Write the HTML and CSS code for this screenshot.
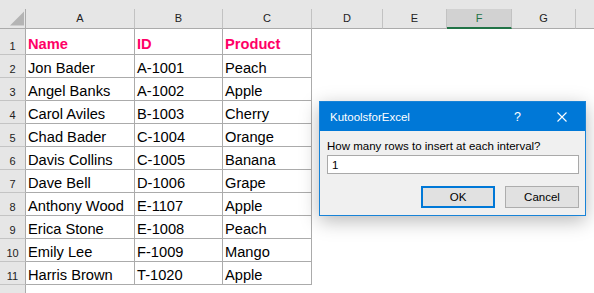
FILE: index.html
```html
<!DOCTYPE html>
<html>
<head>
<meta charset="utf-8">
<link rel="stylesheet" href="styles.css">
</head>
<body>
<div class="sheet">
  <div class="band"></div>
  <div class="row head">
    <div class="corner"><svg width="25" height="19" viewBox="0 0 25 19"><polygon points="10,16.5 24,16.5 24,2.5" fill="#b4b4b4"/></svg></div>
    <div class="ch">A</div>
    <div class="ch">B</div>
    <div class="ch">C</div>
    <div class="ch">D</div>
    <div class="ch">E</div>
    <div class="ch sel">F</div>
    <div class="ch">G</div>
    <div class="ch last"></div>
  </div>
  <div class="row first">
    <div class="rh">1</div><div class="c hd">Name</div><div class="c hd">ID</div><div class="c hd">Product</div>
  </div>
  <div class="row"><div class="rh">2</div><div class="c">Jon Bader</div><div class="c">A-1001</div><div class="c">Peach</div></div>
  <div class="row"><div class="rh">3</div><div class="c">Angel Banks</div><div class="c">A-1002</div><div class="c">Apple</div></div>
  <div class="row"><div class="rh">4</div><div class="c">Carol Aviles</div><div class="c">B-1003</div><div class="c">Cherry</div></div>
  <div class="row"><div class="rh">5</div><div class="c">Chad Bader</div><div class="c">C-1004</div><div class="c">Orange</div></div>
  <div class="row"><div class="rh">6</div><div class="c">Davis Collins</div><div class="c">C-1005</div><div class="c">Banana</div></div>
  <div class="row"><div class="rh">7</div><div class="c">Dave Bell</div><div class="c">D-1006</div><div class="c">Grape</div></div>
  <div class="row"><div class="rh">8</div><div class="c">Anthony Wood</div><div class="c">E-1107</div><div class="c">Apple</div></div>
  <div class="row"><div class="rh">9</div><div class="c">Erica Stone</div><div class="c">E-1008</div><div class="c">Peach</div></div>
  <div class="row"><div class="rh">10</div><div class="c">Emily Lee</div><div class="c">F-1009</div><div class="c">Mango</div></div>
  <div class="row"><div class="rh">11</div><div class="c">Harris Brown</div><div class="c">T-1020</div><div class="c">Apple</div></div>
  <div class="row tail"><div class="rh"></div></div>
</div>

<div class="dialog">
  <div class="titlebar">
    <span class="title">KutoolsforExcel</span>
    <span class="help">?</span>
    <svg class="close" width="10" height="10" viewBox="0 0 10 10"><path d="M0.5 0.5 L9.5 9.5 M9.5 0.5 L0.5 9.5" stroke="#fff" stroke-width="1.1" fill="none"/></svg>
  </div>
  <div class="dbody">
    <div class="label">How many rows to insert at each interval?</div>
    <input class="field" type="text" value="1">
    <div class="buttons">
      <button class="btn ok">OK</button>
      <button class="btn">Cancel</button>
    </div>
  </div>
</div>
</body>
</html>
```

FILE: styles.css
```css
html, body {
  margin: 0;
  padding: 0;
  background: #fff;
  overflow: hidden;
}
body {
  width: 594px;
  height: 293px;
  position: relative;
  font-family: "Liberation Sans", Arial, sans-serif;
  color: #000;
}
.sheet {
  display: flex;
  flex-direction: column;
  height: 293px;
}
.band {
  height: 9px;
  background: #e6e6e6;
}
.row {
  display: grid;
  grid-template-columns: 26px 109px 88px 89px 71px 64px 65px 64px 1fr;
  height: 23px;
}
.row > div {
  box-sizing: border-box;
}
.head {
  height: 20px;
  background: #e6e6e6;
}
.corner {
  border-right: 1px solid #ababab;
  border-bottom: 1px solid #ababab;
  display: flex;
}
.ch {
  border-right: 1px solid #c2c2c2;
  border-bottom: 1px solid #ababab;
  font-size: 11px;
  line-height: 19px;
  text-align: center;
  color: #222;
}
.ch.last {
  border-right: none;
}
.ch.sel {
  background: #d2d2d2;
  border-bottom: 2px solid #217346;
  color: #217346;
  line-height: 18px;
}
.first {
  height: 26px;
}
.rh {
  background: #e6e6e6;
  border-right: 1px solid #ababab;
  border-bottom: 1px solid #c4c4c4;
  font-size: 11px;
  line-height: 15px;
  color: #222;
  display: flex;
  align-items: flex-end;
  justify-content: center;
}
.c {
  border-right: 1px solid #ababab;
  border-bottom: 1px solid #ababab;
  font-size: 14.67px;
  line-height: 17px;
  padding-left: 2px;
  display: flex;
  align-items: flex-end;
  white-space: nowrap;
}
.first .c {
  padding-bottom: 1px;
}
.c.hd {
  font-weight: bold;
  color: #ff0066;
}
.tail {
  flex: 1;
}
.tail .rh {
  border-bottom: none;
}

/* dialog */
.dialog {
  position: absolute;
  left: 319px;
  top: 101px;
  width: 267px;
  box-sizing: border-box;
  border: 1px solid #1883d7;
  background: #f0f0f0;
  box-shadow: 0 5px 18px rgba(0, 0, 0, 0.28);
  font-size: 11.5px;
}
.titlebar {
  height: 29px;
  background: #0078d7;
  color: #fff;
  display: flex;
  align-items: center;
  padding: 0 18px 0 10px;
}
.title {
  flex: 1;
  line-height: 29px;
  margin-top: 1px;
}
.help {
  font-size: 12.5px;
  margin-right: 36px;
}
.close {
  display: block;
}
.dbody {
  padding: 8px 6px 7px 7px;
}
.label {
  line-height: 14px;
  margin-bottom: 2px;
}
.field {
  display: block;
  box-sizing: border-box;
  width: 100%;
  height: 19px;
  margin: 0 0 12px 0;
  border: 1px solid #a9a9a9;
  background: #fff;
  padding: 0 4px;
  font-family: "Liberation Sans", Arial, sans-serif;
  font-size: 11.5px;
  color: #000;
  outline: none;
}
.buttons {
  display: flex;
  justify-content: flex-end;
  gap: 10px;
}
.btn {
  box-sizing: border-box;
  width: 74px;
  height: 22px;
  margin: 0;
  padding: 0;
  background: #e1e1e1;
  border: 1px solid #adadad;
  font-family: "Liberation Sans", Arial, sans-serif;
  font-size: 11.5px;
  color: #000;
}
.btn.ok {
  border: 2px solid #0078d7;
}
```
